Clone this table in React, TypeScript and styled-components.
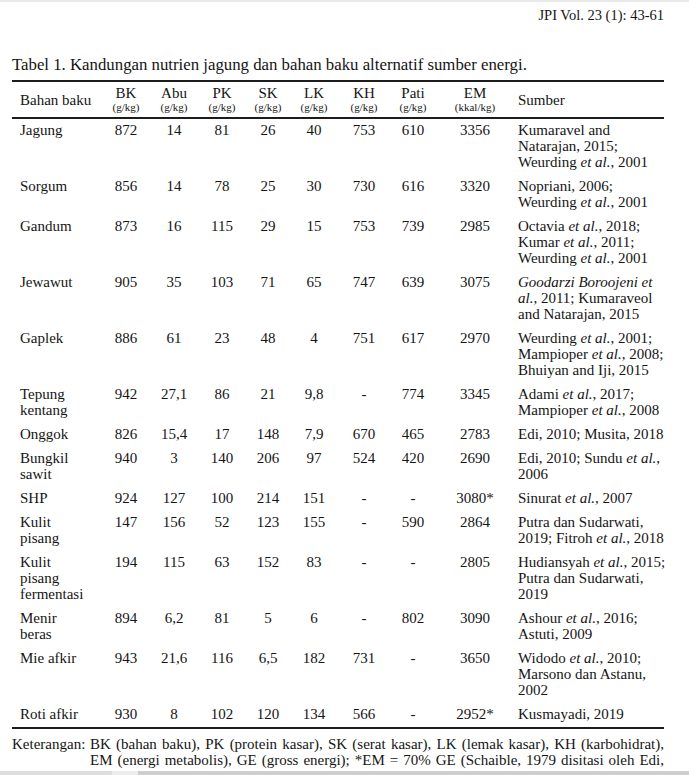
import React from "react";
import styled, { createGlobalStyle } from "styled-components";

const GlobalStyle = createGlobalStyle`
  html, body {
    margin: 0;
    padding: 0;
    overflow: hidden;
    background: #ffffff;
  }
  body {
    font-family: "Liberation Serif", "Times New Roman", serif;
    color: #151515;
  }
`;

const Page = styled.div`
  border-top: 2px solid #e9e9e9;
  padding: 0 25px 0 12px;
  display: flex;
  flex-direction: column;
`;

const RunningHead = styled.div`
  margin-top: 4px;
  font-size: 14.5px;
  line-height: 18px;
  text-align: right;
`;

const Caption = styled.div`
  margin-top: 31px;
  font-size: 16.8px;
  line-height: 20px;
  white-space: nowrap;
`;

const Table = styled.table`
  margin-top: 5px;
  width: 652px;
  table-layout: fixed;
  border-collapse: collapse;
  font-size: 15px;
  line-height: 16px;
`;

const Head = styled.thead`
  border-top: 2px solid #1c1c1c;
  border-bottom: 2px solid #1c1c1c;
`;

const Body = styled.tbody`
  border-bottom: 2px solid #1c1c1c;
`;

const HeadCell = styled.th<{ $align?: "left" | "center" }>`
  font-weight: normal;
  text-align: ${(p) => p.$align ?? "center"};
  vertical-align: middle;
  padding: 3px 0 3px ${(p) => (p.$align === "left" ? "8px" : "0")};
  white-space: nowrap;
`;

const SourceHead = styled(HeadCell)`
  padding-left: 2px;
`;

const Unit = styled.div`
  font-size: 11px;
  line-height: 13px;
`;

const NameCell = styled.td`
  vertical-align: top;
  padding: 3px 0 5px 8px;
  white-space: nowrap;
`;

const NumCell = styled.td`
  vertical-align: top;
  text-align: center;
  padding: 3px 0 5px;
  white-space: nowrap;
`;

const SourceCell = styled.td`
  vertical-align: top;
  padding: 3px 0 5px 2px;
  white-space: nowrap;
`;

const Line = styled.div``;

const Note = styled.div`
  margin-top: 7px;
  display: flex;
  font-size: 15px;
  line-height: 16px;
  width: 652px;
`;

const NoteLabel = styled.div`
  flex: 0 0 78px;
  white-space: nowrap;
`;

const NoteLines = styled.div`
  flex: 1;
  display: flex;
  flex-direction: column;
`;

const NoteLine = styled.div`
  text-align: justify;
  text-align-last: justify;
  white-space: nowrap;
`;

const ScrollStrip = styled.div`
  position: fixed;
  left: 0;
  right: 0;
  bottom: 0;
  height: 4px;
  display: flex;
`;

const StripSegment = styled.div<{ $w?: number; $c: string }>`
  flex: ${(p) => (p.$w ? `0 0 ${p.$w}px` : "1")};
  background: ${(p) => p.$c};
`;

type Row = {
  name: string[];
  v: string[];
  src: string[];
};

const rows: Row[] = [
  {
    name: ["Jagung"],
    v: ["872", "14", "81", "26", "40", "753", "610", "3356"],
    src: ["Kumaravel and", "Natarajan, 2015;", "Weurding _et al._, 2001"],
  },
  {
    name: ["Sorgum"],
    v: ["856", "14", "78", "25", "30", "730", "616", "3320"],
    src: ["Nopriani, 2006;", "Weurding _et al._, 2001"],
  },
  {
    name: ["Gandum"],
    v: ["873", "16", "115", "29", "15", "753", "739", "2985"],
    src: ["Octavia _et al._, 2018;", "Kumar _et al._, 2011;", "Weurding _et al._, 2001"],
  },
  {
    name: ["Jewawut"],
    v: ["905", "35", "103", "71", "65", "747", "639", "3075"],
    src: ["_Goodarzi Boroojeni et_", "_al._, 2011; Kumaraveol", "and Natarajan, 2015"],
  },
  {
    name: ["Gaplek"],
    v: ["886", "61", "23", "48", "4", "751", "617", "2970"],
    src: ["Weurding _et al._, 2001;", "Mampioper _et al._, 2008;", "Bhuiyan and Iji, 2015"],
  },
  {
    name: ["Tepung", "kentang"],
    v: ["942", "27,1", "86", "21", "9,8", "-", "774", "3345"],
    src: ["Adami _et al._, 2017;", "Mampioper _et al._, 2008"],
  },
  {
    name: ["Onggok"],
    v: ["826", "15,4", "17", "148", "7,9", "670", "465", "2783"],
    src: ["Edi, 2010; Musita, 2018"],
  },
  {
    name: ["Bungkil", "sawit"],
    v: ["940", "3", "140", "206", "97", "524", "420", "2690"],
    src: ["Edi, 2010; Sundu _et al._,", "2006"],
  },
  {
    name: ["SHP"],
    v: ["924", "127", "100", "214", "151", "-", "-", "3080*"],
    src: ["Sinurat _et al._, 2007"],
  },
  {
    name: ["Kulit", "pisang"],
    v: ["147", "156", "52", "123", "155", "-", "590", "2864"],
    src: ["Putra dan Sudarwati,", "2019; Fitroh _et al._, 2018"],
  },
  {
    name: ["Kulit", "pisang", "fermentasi"],
    v: ["194", "115", "63", "152", "83", "-", "-", "2805"],
    src: ["Hudiansyah _et al._, 2015;", "Putra dan Sudarwati,", "2019"],
  },
  {
    name: ["Menir", "beras"],
    v: ["894", "6,2", "81", "5", "6", "-", "802", "3090"],
    src: ["Ashour _et al._, 2016;", "Astuti, 2009"],
  },
  {
    name: ["Mie afkir"],
    v: ["943", "21,6", "116", "6,5", "182", "731", "-", "3650"],
    src: ["Widodo _et al._, 2010;", "Marsono dan Astanu,", "2002"],
  },
  {
    name: ["Roti afkir"],
    v: ["930", "8", "102", "120", "134", "566", "-", "2952*"],
    src: ["Kusmayadi, 2019"],
  },
];

const heads: [string, string][] = [
  ["BK", "(g/kg)"],
  ["Abu", "(g/kg)"],
  ["PK", "(g/kg)"],
  ["SK", "(g/kg)"],
  ["LK", "(g/kg)"],
  ["KH", "(g/kg)"],
  ["Pati", "(g/kg)"],
  ["EM", "(kkal/kg)"],
];

const colWidths = [92, 44, 52, 44, 48, 44, 56, 42, 82, 148];

function renderMarked(text: string) {
  const parts = text.split("_");
  return parts.map((p, i) => (i % 2 === 1 ? <em key={i}>{p}</em> : <React.Fragment key={i}>{p}</React.Fragment>));
}

export default function App() {
  return (
    <>
      <GlobalStyle />
      <Page>
        <RunningHead>JPI Vol. 23 (1): 43-61</RunningHead>
        <Caption>Tabel 1. Kandungan nutrien jagung dan bahan baku alternatif sumber energi.</Caption>
        <Table>
          <colgroup>
            {colWidths.map((w, i) => (
              <col key={i} style={{ width: w }} />
            ))}
          </colgroup>
          <Head>
            <tr>
              <HeadCell $align="left">Bahan baku</HeadCell>
              {heads.map(([t, u]) => (
                <HeadCell key={t}>
                  <Line>{t}</Line>
                  <Unit>{u}</Unit>
                </HeadCell>
              ))}
              <SourceHead $align="left">Sumber</SourceHead>
            </tr>
          </Head>
          <Body>
            {rows.map((r, ri) => (
              <tr key={ri}>
                <NameCell>
                  {r.name.map((n, i) => (
                    <Line key={i}>{n}</Line>
                  ))}
                </NameCell>
                {r.v.map((v, i) => (
                  <NumCell key={i}>{v}</NumCell>
                ))}
                <SourceCell>
                  {r.src.map((s, i) => (
                    <Line key={i}>{renderMarked(s)}</Line>
                  ))}
                </SourceCell>
              </tr>
            ))}
          </Body>
        </Table>
        <Note>
          <NoteLabel>Keterangan:</NoteLabel>
          <NoteLines>
            <NoteLine>
              BK (bahan baku), PK (protein kasar), SK (serat kasar), LK (lemak kasar), KH (karbohidrat),
            </NoteLine>
            <NoteLine>
              EM (energi metabolis), GE (gross energi); *EM = 70% GE (Schaible, 1979 disitasi oleh Edi,
            </NoteLine>
          </NoteLines>
        </Note>
      </Page>
      <ScrollStrip>
        <StripSegment $w={112} $c="#dedede" />
        <StripSegment $w={26} $c="#ededed" />
        <StripSegment $c="#cecece" />
      </ScrollStrip>
    </>
  );
}
